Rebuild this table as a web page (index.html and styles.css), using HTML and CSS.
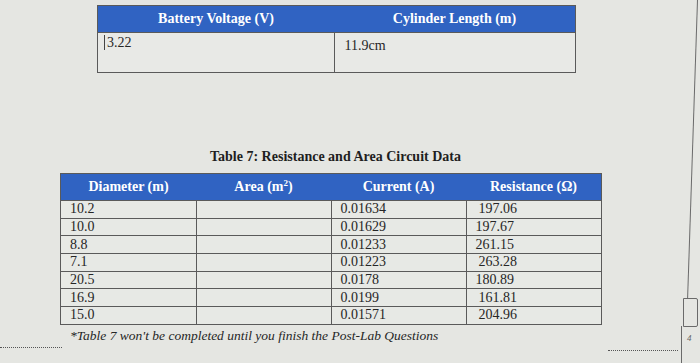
FILE: index.html
```html
<!DOCTYPE html>
<html lang="en">
<head>
<meta charset="utf-8">
<title>Table 7</title>
<link rel="stylesheet" href="styles.css">
</head>
<body>
<main class="page">
  <table class="t1">
    <thead>
      <tr><th class="c1">Battery Voltage (V)</th><th class="c2">Cylinder Length (m)</th></tr>
    </thead>
    <tbody>
      <tr><td class="v1"><span class="cursor"></span>3.22</td><td class="v2">11.9cm</td></tr>
    </tbody>
  </table>

  <p class="caption">Table 7: Resistance and Area Circuit Data</p>

  <table class="t2">
    <thead>
      <tr><th>Diameter (m)</th><th>Area (m<sup>2</sup>)</th><th>Current (A)</th><th>Resistance (Ω)</th></tr>
    </thead>
    <tbody>
      <tr><td>10.2</td><td></td><td>0.01634</td><td class="ind">197.06</td></tr>
      <tr><td>10.0</td><td></td><td>0.01629</td><td>197.67</td></tr>
      <tr><td>8.8</td><td></td><td>0.01233</td><td>261.15</td></tr>
      <tr><td>7.1</td><td></td><td>0.01223</td><td class="ind">263.28</td></tr>
      <tr><td>20.5</td><td></td><td>0.0178</td><td>180.89</td></tr>
      <tr><td>16.9</td><td></td><td>0.0199</td><td class="ind">161.81</td></tr>
      <tr><td>15.0</td><td></td><td>0.01571</td><td class="ind">204.96</td></tr>
    </tbody>
  </table>

  <p class="note">*Table 7 won't be completed until you finish the Post-Lab Questions</p>
</main>

<div class="dots dots-left"></div>
<div class="dots dots-right"></div>
<div class="margin-line"></div>
<div class="margin-tab"></div>
<div class="margin-line2"></div>
<span class="page-no">4</span>
</body>
</html>
```

FILE: styles.css
```css
html, body {
  margin: 0;
  padding: 0;
}
body {
  width: 700px;
  height: 363px;
  overflow: hidden;
  background: #e5e6e2;
  font-family: "Liberation Serif", "Times New Roman", serif;
  color: #262626;
  position: relative;
}
.page {
  display: flex;
  flex-direction: column;
  padding-top: 5px;
}
table {
  border-collapse: collapse;
  table-layout: fixed;
}
th {
  background: #3063c2;
  color: #ffffff;
  font-weight: bold;
  font-size: 14px;
  text-align: center;
  padding: 0;
}
td {
  border: 1px solid #5a5a5a;
  font-size: 14px;
  padding: 0 0 0 8px;
  text-align: left;
  color: #262626;
}

/* top table */
.t1 {
  margin-left: 97px;
  width: 479px;
  border: 1px solid #5a5a5a;
  background: #e8e9e6;
}
.t1 th {
  height: 26px;
}
.t1 th.c1 { width: 236px; }
.t1 tbody tr {
  height: 40px;
}
.t1 td {
  vertical-align: top;
}
.t1 td.v1 {
  padding: 2px 0 0 6px;
}
.t1 td.v2 {
  padding: 5px 0 0 10px;
}
.cursor {
  display: inline-block;
  width: 1px;
  height: 15px;
  background: #444;
  vertical-align: -3px;
  margin-right: 2px;
}

/* caption */
.caption {
  margin: 76px 0 0 210px;
  font-weight: bold;
  font-size: 14px;
  line-height: 16px;
  color: #1e1e1e;
}

/* second table */
.t2 {
  margin: 8px 0 0 60px;
  width: 540px;
  border: 1px solid #5a5a5a;
  background: #e7e9e5;
}
.t2 th {
  height: 26px;
  width: 135px;
}
.t2 th sup {
  font-size: 9px;
  line-height: 0;
  vertical-align: 5px;
}
.t2 td {
  height: 16.7px;
  line-height: 16px;
  padding: 0 0 0 9px;
}
.t2 td.ind {
  padding-left: 12px;
}

/* footnote */
.note {
  margin: 3px 0 0 70px;
  font-style: italic;
  font-size: 13.5px;
  line-height: 16px;
  color: #262626;
}

/* page decorations */
.dots {
  position: absolute;
  height: 0;
  border-top: 1px dotted #555;
}
.dots-left {
  left: 0;
  top: 347px;
  width: 62px;
}
.dots-right {
  left: 608px;
  top: 350px;
  width: 70px;
}
.margin-line {
  position: absolute;
  left: 697px;
  top: 0;
  width: 0;
  height: 299px;
  border-left: 1px solid #6a6a6a;
  transform: rotate(1.9deg);
  transform-origin: top left;
}
.margin-tab {
  position: absolute;
  left: 683px;
  top: 298px;
  width: 13px;
  height: 27px;
  border: 1px solid #6a6a6a;
  border-radius: 0 2px 2px 0;
}
.margin-line2 {
  position: absolute;
  left: 681px;
  top: 326px;
  width: 0;
  height: 37px;
  border-left: 1px solid #6a6a6a;
}
.page-no {
  position: absolute;
  left: 687px;
  top: 333px;
  font-size: 9px;
  font-style: italic;
  color: #666;
}
```
